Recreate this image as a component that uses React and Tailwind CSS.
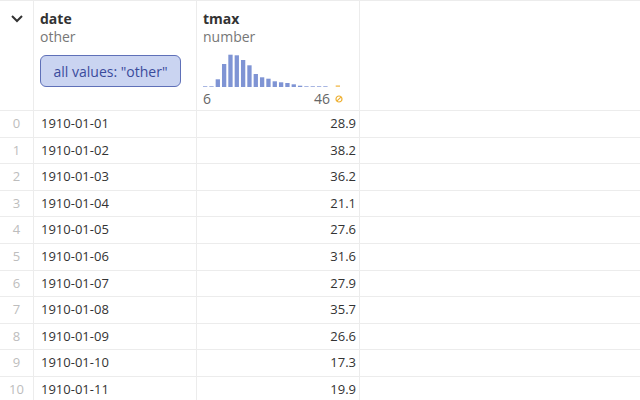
import React from 'react';

const rows = [
  ['1910-01-01', '28.9'],
  ['1910-01-02', '38.2'],
  ['1910-01-03', '36.2'],
  ['1910-01-04', '21.1'],
  ['1910-01-05', '27.6'],
  ['1910-01-06', '31.6'],
  ['1910-01-07', '27.9'],
  ['1910-01-08', '35.7'],
  ['1910-01-09', '26.6'],
  ['1910-01-10', '17.3'],
  ['1910-01-11', '19.9'],
];

// bar heights in px, 0 = empty bin (drawn as a dash)
const bins = [0, 0, 7.7, 23, 32.3, 31.7, 27, 21.7, 13, 9.7, 8.3, 5.7, 4.7, 4, 2.7, 1.3, 0, 0, 0, 0];

const Histogram = () => {
  const base = 34;
  return (
    <svg width="142" height="35" viewBox="0 0 142 35" className="block">
      {bins.map((h, i) => {
        const x = i * 6.33;
        if (h === 0) {
          return <rect key={i} x={x} y={base - 1} width="4.3" height="1" fill="#a8b6e2" />;
        }
        return <rect key={i} x={x} y={base - h} width="4.3" height={h} fill="#7f94d4" />;
      })}
      <rect x="132.7" y={base - 1.5} width="4.3" height="1.2" fill="#f0b23a" />
    </svg>
  );
};

const NullIcon = () => (
  <svg width="8" height="8" viewBox="0 0 8 8" className="inline-block">
    <circle cx="4" cy="4" r="3" fill="none" stroke="#eeb031" strokeWidth="1.2" />
    <line x1="1.8" y1="6.2" x2="6.2" y2="1.8" stroke="#eeb031" strokeWidth="1.2" />
  </svg>
);

export default function App() {
  return (
    <div
      className="w-[640px] h-[400px] overflow-hidden bg-white text-[#333]"
      style={{ fontFamily: '"Open Sans", "Noto Sans", sans-serif' }}
    >
      {/* header */}
      <div className="grid grid-cols-[34px_163px_163px_1fr] h-[111px] border-t border-b border-[#ececec]">
        <div className="border-r border-[#ececec] flex justify-center pt-[13px]">
          <svg width="14" height="9" viewBox="0 0 14 9">
            <path d="M2 2 L7 7 L12 2" fill="none" stroke="#333" strokeWidth="2" />
          </svg>
        </div>
        <div className="border-r border-[#ececec] px-[6px] pt-[9px]">
          <div className="text-[14px] leading-[18px] font-bold">date</div>
          <div className="text-[14px] leading-[18px] text-[#777]">other</div>
          <div className="mt-[9px] w-[141px] h-[32px] rounded-[6px] border border-[#5f70b8] bg-[#cad4f1] flex items-center justify-center text-[14px] text-[#3a4b9c]">
            all values: "other"
          </div>
        </div>
        <div className="border-r border-[#ececec] px-[6px] pt-[9px]">
          <div className="text-[14px] leading-[18px] font-bold">tmax</div>
          <div className="text-[14px] leading-[18px] text-[#777]">number</div>
          <div className="mt-[7px]">
            <Histogram />
          </div>
          <div className="mt-[2px] flex items-center w-[140px] text-[14px] leading-[17px] text-[#666]">
            <span>6</span>
            <span className="ml-auto">46</span>
            <span className="ml-[5px] w-[8px] flex"><NullIcon /></span>
          </div>
        </div>
        <div />
      </div>

      {/* rows */}
      {rows.map(([d, v], i) => (
        <div
          key={i}
          className="grid grid-cols-[34px_163px_163px_1fr] h-[26.6px] border-b border-[#ececec] text-[13px]"
        >
          <div className="border-r border-[#ececec] flex items-center justify-center text-[#bdbdbd]">{i}</div>
          <div className="border-r border-[#ececec] flex items-center px-[7px]">{d}</div>
          <div className="border-r border-[#ececec] flex items-center justify-end pr-[3px]">{v}</div>
          <div />
        </div>
      ))}
    </div>
  );
}
